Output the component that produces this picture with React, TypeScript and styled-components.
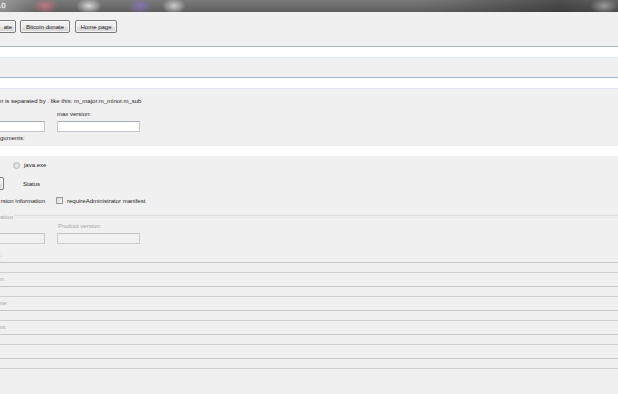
import React from "react";
import styled, { createGlobalStyle } from "styled-components";

const Global = createGlobalStyle`
  html, body { margin: 0; padding: 0; background: #f0f0f0; }
  body { font-family: "Liberation Sans", Arial, sans-serif; }
`;

const Window = styled.div`
  width: 618px;
  height: 394px;
  overflow: hidden;
  background: #f0f0f0;
  display: flex;
  flex-direction: column;
  font-family: "Liberation Sans", Arial, sans-serif;
  font-size: 6px;
  color: #1e1e1e;
`;

const TitleBar = styled.div`
  flex: none;
  height: 12px;
  display: flex;
  align-items: center;
  color: #ffffff;
  font-size: 8px;
  line-height: 12px;
  text-shadow: 0 0 3px rgba(255, 255, 255, 0.6);
  background:
    radial-gradient(ellipse 13px 8px at 45px 6px, rgba(215, 120, 135, 0.75), rgba(215, 120, 135, 0) 100%),
    radial-gradient(ellipse 13px 8px at 89px 6px, rgba(240, 240, 240, 0.8), rgba(240, 240, 240, 0) 100%),
    radial-gradient(ellipse 12px 8px at 140px 6px, rgba(140, 115, 200, 0.75), rgba(140, 115, 200, 0) 100%),
    radial-gradient(ellipse 12px 8px at 174px 6px, rgba(235, 235, 235, 0.75), rgba(235, 235, 235, 0) 100%),
    radial-gradient(ellipse 14px 8px at 604px 6px, rgba(200, 200, 200, 0.6), rgba(200, 200, 200, 0) 100%),
    linear-gradient(to right, rgba(180, 180, 180, 0.55) 0px, rgba(0, 0, 0, 0) 40px, rgba(0, 0, 0, 0) 420px, rgba(0, 0, 0, 0.35) 560px, rgba(0, 0, 0, 0.2) 618px),
    linear-gradient(to bottom, #7a7a7a, #5e5e5e);
`;

const TitleText = styled.span`
  margin-left: -1px;
`;

const Toolbar = styled.div`
  flex: none;
  height: 34px;
  box-sizing: border-box;
  padding-top: 8px;
  display: flex;
  align-items: flex-start;
  gap: 4px;
`;

const Button = styled.button<{ $w: number; $ml?: number; $align?: string }>`
  box-sizing: border-box;
  width: ${(p) => p.$w}px;
  height: 13px;
  margin: 0 0 0 ${(p) => p.$ml ?? 0}px;
  padding: 0 3px;
  flex: none;
  display: flex;
  align-items: center;
  justify-content: ${(p) => p.$align ?? "center"};
  border: 1px solid #7a7a7a;
  border-radius: 2px;
  background: linear-gradient(to bottom, #f4f4f4 0%, #ececec 50%, #e0e0e0 51%, #d6d6d6 100%);
  box-shadow: inset 0 0 0 1px rgba(255, 255, 255, 0.7);
  font-family: inherit;
  font-size: 6px;
  color: #1a1a1a;
  white-space: nowrap;
`;

const PathField = styled.input<{ $top: number }>`
  display: block;
  flex: none;
  box-sizing: border-box;
  width: calc(100% + 4px);
  height: 12px;
  margin: ${(p) => p.$top}px -2px 0;
  padding: 0;
  border: 1px solid #e3e9ef;
  border-top-color: #a7b6c6;
  background: #ffffff;
  outline: none;
`;

const Body = styled.div`
  flex: 1;
  display: flex;
  flex-direction: column;
`;

const TextLine = styled.div<{ $top: number; $muted?: boolean }>`
  height: 8px;
  line-height: 8px;
  margin-top: ${(p) => p.$top}px;
  color: ${(p) => (p.$muted ? "#a6a6a6" : "#1e1e1e")};
  white-space: nowrap;
`;

const Columns = styled.div<{ $top: number }>`
  display: grid;
  grid-template-columns: 55px 83px;
  column-gap: 12px;
  margin-left: -10px;
  margin-top: ${(p) => p.$top}px;
  align-items: center;
`;

const ColText = styled.div<{ $muted?: boolean; $right?: boolean; $shift?: number }>`
  height: 8px;
  line-height: 8px;
  white-space: nowrap;
  color: ${(p) => (p.$muted ? "#a6a6a6" : "#1e1e1e")};
  text-align: ${(p) => (p.$right ? "right" : "left")};
  margin-left: ${(p) => p.$shift ?? 0}px;
`;

const SmallInput = styled.input<{ $disabled?: boolean }>`
  display: block;
  box-sizing: border-box;
  width: 100%;
  height: 11px;
  margin: 0;
  padding: 0;
  border: 1px solid ${(p) => (p.$disabled ? "#cdcdcd" : "#c3c6cc")};
  border-top-color: ${(p) => (p.$disabled ? "#c4c4c4" : "#a9adb5")};
  background: ${(p) => (p.$disabled ? "#f0f0f0" : "#ffffff")};
  outline: none;
`;

const ArgsField = styled.input`
  display: block;
  box-sizing: border-box;
  width: calc(100% + 4px);
  height: 11px;
  margin: 3px -2px 0;
  padding: 0;
  border: none;
  border-top: 1px solid #ececec;
  background: #ffffff;
  outline: none;
`;

const OptionRow = styled.div<{ $top: number; $h: number; $indent?: number }>`
  display: flex;
  align-items: center;
  height: ${(p) => p.$h}px;
  margin-top: ${(p) => p.$top}px;
  padding-left: ${(p) => p.$indent ?? 0}px;
  white-space: nowrap;
`;

const Radio = styled.span`
  box-sizing: border-box;
  width: 7px;
  height: 7px;
  border-radius: 50%;
  border: 1px solid #b8b8b8;
  background: radial-gradient(circle at 50% 50%, #ececec 0%, #dcdcdc 55%, #f8f8f8 100%);
  margin-right: 4px;
  flex: none;
`;

const Check = styled.span`
  box-sizing: border-box;
  width: 7px;
  height: 7px;
  border: 1px solid #9a9a9a;
  background: linear-gradient(135deg, #d8d8d8, #f4f4f4);
  margin-right: 4px;
  margin-left: -1px;
  flex: none;
`;

const StatusLabel = styled.span`
  margin-left: 19px;
  line-height: 8px;
`;

const GroupHeader = styled.div`
  display: flex;
  align-items: center;
  height: 9px;
  margin-top: 7px;
  color: #a6a6a6;
  line-height: 8px;
`;

const GroupLine = styled.div`
  flex: 1;
  height: 1px;
  margin-left: 2px;
  border-top: 1px solid #d9dcde;
  border-bottom: 1px solid #e8e8e8;
`;

const WideInput = styled.input`
  display: block;
  box-sizing: border-box;
  width: calc(100% + 4px);
  height: 11px;
  margin: 3px -2px 0;
  padding: 0;
  border: 1px solid #d0d0d0;
  border-top-color: #c6c6c6;
  background: #f0f0f0;
  outline: none;
`;

const FieldBlock = styled.div<{ $top: number }>`
  margin-top: ${(p) => p.$top}px;
`;

const versionFields = [":", "n:", "ne:", "nt:", ""];

export default function App() {
  return (
    <>
      <Global />
      <Window>
        <TitleBar>
          <TitleText>.0</TitleText>
        </TitleBar>
        <Toolbar>
          <Button $w={30} $ml={-14} $align="flex-end">ate</Button>
          <Button $w={50}>Bitcoin donate</Button>
          <Button $w={42} $ml={1}>Home page</Button>
        </Toolbar>
        <PathField $top={0} readOnly />
        <PathField $top={19} readOnly />
        <Body>
          <TextLine $top={8}>n is separated by . like this: m_major.m_minor.m_sub</TextLine>
          <Columns $top={5}>
            <ColText />
            <ColText>max version:</ColText>
          </Columns>
          <Columns $top={3}>
            <SmallInput readOnly />
            <SmallInput readOnly />
          </Columns>
          <TextLine $top={2}>guments:</TextLine>
          <ArgsField readOnly />
          <OptionRow $top={5} $h={8} $indent={13}>
            <Radio />
            <span>java.exe</span>
          </OptionRow>
          <OptionRow $top={8} $h={13}>
            <Button $w={20} $ml={-16} aria-label="browse" />
            <StatusLabel>Status</StatusLabel>
          </OptionRow>
          <Columns $top={6}>
            <ColText $right>rsion information</ColText>
            <OptionRow $top={0} $h={9}>
              <Check />
              <span>requireAdministrator manifest</span>
            </OptionRow>
          </Columns>
          <GroupHeader>
            <span>ation</span>
            <GroupLine />
          </GroupHeader>
          <Columns $top={1}>
            <ColText />
            <ColText $muted $shift={1}>Product version:</ColText>
          </Columns>
          <Columns $top={3}>
            <SmallInput $disabled readOnly />
            <SmallInput $disabled readOnly />
          </Columns>
          {versionFields.map((label, i) => (
            <FieldBlock key={i} $top={i === 0 ? 7 : 2}>
              <TextLine $top={0} $muted>{label}</TextLine>
              <WideInput readOnly />
            </FieldBlock>
          ))}
        </Body>
      </Window>
    </>
  );
}
